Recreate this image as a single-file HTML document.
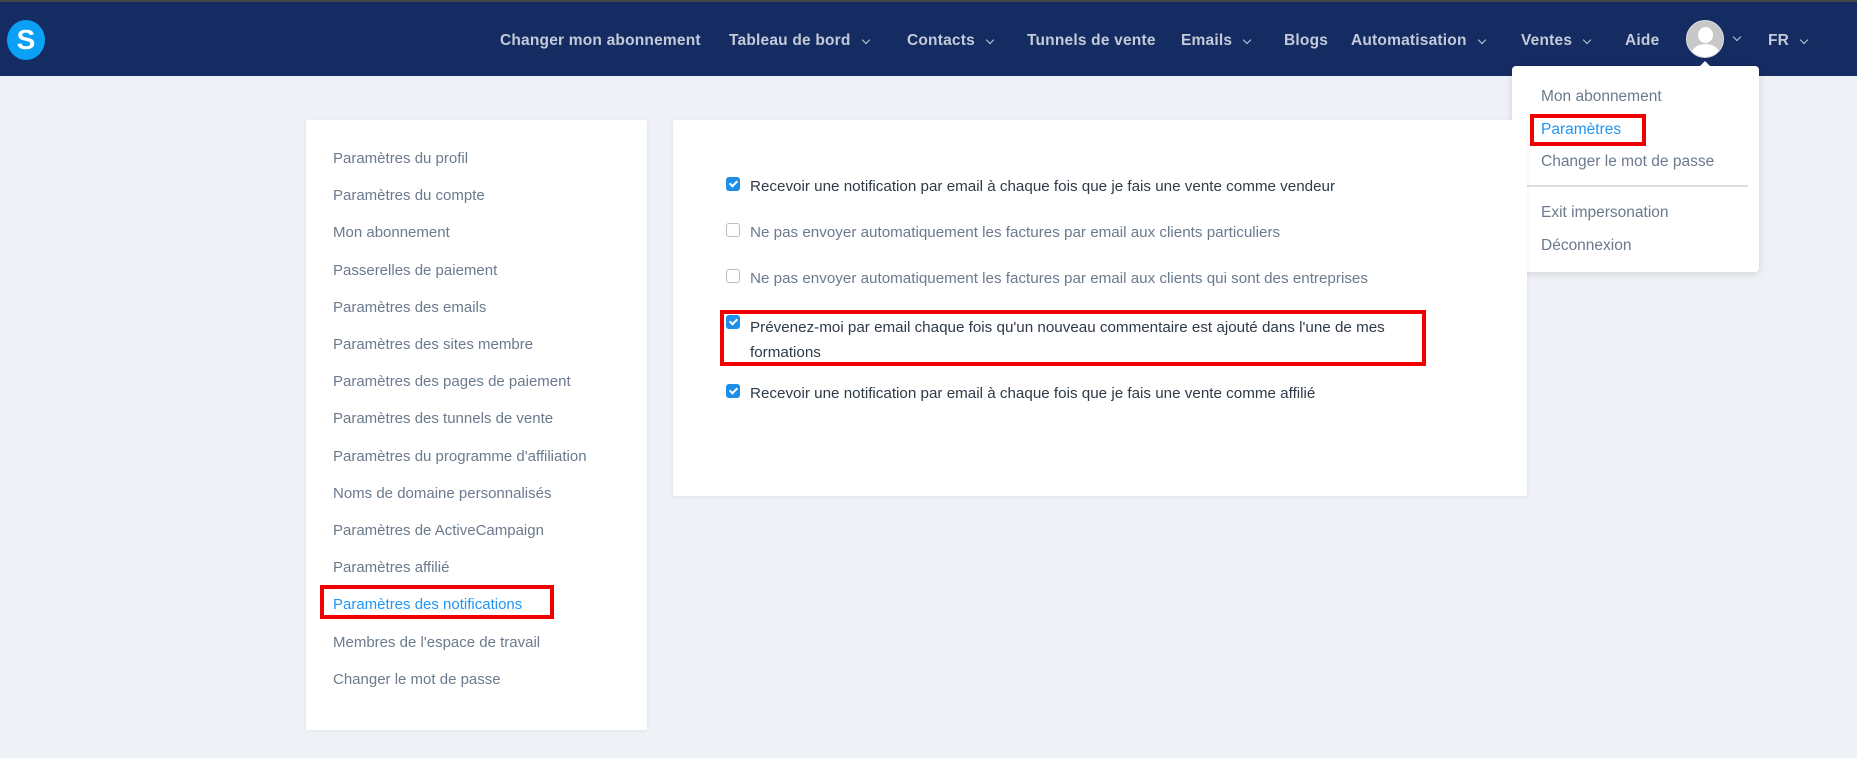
<!DOCTYPE html>
<html><head><meta charset="utf-8"><style>
*{margin:0;padding:0;box-sizing:border-box}
body{width:1857px;height:758px;background:#eef1f6;font-family:"Liberation Sans",sans-serif;position:relative;overflow:hidden}
.a{position:absolute;white-space:nowrap}
.nav{position:absolute;left:0;top:0;width:1857px;height:76px;background:#152c63;border-top:2px solid #444}
.ni{position:absolute;top:30px;color:#c3cad8;font-size:15.5px;font-weight:bold;letter-spacing:0.2px}
.chev{display:inline-block;width:6px;height:6px;border-right:1.5px solid #c3cad8;border-bottom:1.5px solid #c3cad8;transform:rotate(45deg);margin-left:12px;position:relative;top:-2px}
.side{position:absolute;left:306px;top:120px;width:341px;height:610px;background:#fff;box-shadow:0 1px 4px rgba(0,0,0,.06)}
.si{position:absolute;left:27px;color:#6b7a8d;font-size:15px;white-space:nowrap}
.card{position:absolute;left:673px;top:120px;width:854px;height:376px;background:#fff;box-shadow:0 1px 4px rgba(0,0,0,.06)}
.cb{position:absolute;width:14px;height:14px;border-radius:3px}
.on{background:#1d8fe8}
.on:after{content:"";position:absolute;left:4.5px;top:2px;width:3px;height:6px;border-right:2px solid #fff;border-bottom:2px solid #fff;transform:rotate(45deg)}
.off{border:1px solid #b9c0c9;background:#fff}
.ct{position:absolute;left:77px;font-size:15.2px;white-space:nowrap}
.red{position:absolute;border:4px solid #f00000}
.dd{position:absolute;left:1512px;top:66px;width:247px;height:206px;background:#fff;border-radius:4px;box-shadow:0 2px 8px rgba(0,0,0,.12)}
.di{position:absolute;left:29px;font-size:15.5px;color:#6b7a8d;white-space:nowrap}
</style></head><body>
<div class="nav">
 <div class="a" style="left:7px;top:18px;width:38px;height:40px;border-radius:50%;background:#0aa0f5;color:#fff;font-weight:bold;font-size:28px;text-align:center;line-height:40px">S</div>
 <div class="ni" style="left:500px">Changer mon abonnement</div>
 <div class="ni" style="left:729px">Tableau de bord<span class="chev"></span></div>
 <div class="ni" style="left:907px">Contacts<span class="chev"></span></div>
 <div class="ni" style="left:1027px">Tunnels de vente</div>
 <div class="ni" style="left:1181px">Emails<span class="chev"></span></div>
 <div class="ni" style="left:1284px">Blogs</div>
 <div class="ni" style="left:1351px">Automatisation<span class="chev"></span></div>
 <div class="ni" style="left:1521px">Ventes<span class="chev"></span></div>
 <div class="ni" style="left:1625px">Aide</div>
 <div class="a" style="left:1686px;top:18px;width:38px;height:38px;border-radius:50%;background:#c8c8c8;overflow:hidden;border:1px solid #ddd">
  <div class="a" style="left:11px;top:6px;width:15px;height:16px;border-radius:50%;background:#fff"></div>
  <div class="a" style="left:4px;top:23px;width:29px;height:22px;border-radius:50%;background:#fff"></div>
 </div>
 <div class="ni" style="left:1734px;top:27px"><span class="chev" style="margin-left:0"></span></div>
 <div class="ni" style="left:1768px">FR<span class="chev"></span></div>
</div>
<div class="a" style="left:1698px;top:61px;width:0;height:0;border-left:7px solid transparent;border-right:7px solid transparent;border-bottom:7px solid #fff"></div>
<div class="dd">
 <div class="di" style="top:22px">Mon abonnement</div>
 <div class="di" style="top:55px;color:#2196f3">Paramètres</div>
 <div class="di" style="top:87px">Changer le mot de passe</div>
 <div class="a" style="left:11px;top:119px;width:225px;height:2px;background:#dcdfe4"></div>
 <div class="di" style="top:138px">Exit impersonation</div>
 <div class="di" style="top:171px">Déconnexion</div>
</div>
<div class="red" style="left:1530px;top:114px;width:116px;height:32px"></div>
<div class="side">
 <div class="si" style="top:30px">Paramètres du profil</div>
 <div class="si" style="top:67px">Paramètres du compte</div>
 <div class="si" style="top:104px">Mon abonnement</div>
 <div class="si" style="top:142px">Passerelles de paiement</div>
 <div class="si" style="top:179px">Paramètres des emails</div>
 <div class="si" style="top:216px">Paramètres des sites membre</div>
 <div class="si" style="top:253px">Paramètres des pages de paiement</div>
 <div class="si" style="top:290px">Paramètres des tunnels de vente</div>
 <div class="si" style="top:328px">Paramètres du programme d'affiliation</div>
 <div class="si" style="top:365px">Noms de domaine personnalisés</div>
 <div class="si" style="top:402px">Paramètres de ActiveCampaign</div>
 <div class="si" style="top:439px">Paramètres affilié</div>
 <div class="si" style="top:476px;color:#2196f3">Paramètres des notifications</div>
 <div class="si" style="top:514px">Membres de l'espace de travail</div>
 <div class="si" style="top:551px">Changer le mot de passe</div>
</div>
<div class="red" style="left:320px;top:585px;width:234px;height:34px"></div>
<div class="card">
 <div class="cb on" style="left:53px;top:57px"></div>
 <div class="ct" style="top:58px;color:#2f3a48">Recevoir une notification par email à chaque fois que je fais une vente comme vendeur</div>
 <div class="cb off" style="left:53px;top:103px"></div>
 <div class="ct" style="top:104px;color:#6b7a8d">Ne pas envoyer automatiquement les factures par email aux clients particuliers</div>
 <div class="cb off" style="left:53px;top:149px"></div>
 <div class="ct" style="top:150px;color:#6b7a8d">Ne pas envoyer automatiquement les factures par email aux clients qui sont des entreprises</div>
 <div class="cb on" style="left:53px;top:195px"></div>
 <div class="ct" style="top:195px;color:#2f3a48;line-height:25px">Prévenez-moi par email chaque fois qu'un nouveau commentaire est ajouté dans l'une de mes<br>formations</div>
 <div class="cb on" style="left:53px;top:264px"></div>
 <div class="ct" style="top:265px;color:#2f3a48">Recevoir une notification par email à chaque fois que je fais une vente comme affilié</div>
</div>
<div class="red" style="left:720px;top:310px;width:706px;height:56px"></div>
</body></html>
